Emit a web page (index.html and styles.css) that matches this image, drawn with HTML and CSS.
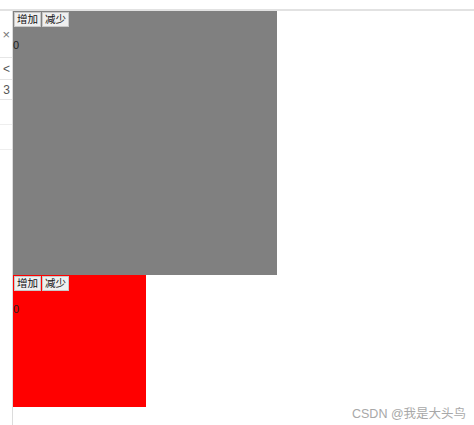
FILE: index.html
```html
<!DOCTYPE html>
<html>
<head>
<meta charset="utf-8">
<link rel="stylesheet" href="styles.css">
</head>
<body>
<div class="topline"></div>
<div class="layout">
  <div class="side">
    <div class="row r1">×</div>
    <div class="row r2">&lt;</div>
    <div class="row r3">3</div>
    <div class="row r4"></div>
    <div class="row r5"></div>
  </div>
  <div class="main">
    <div class="box gray">
      <div class="btns"><button class="btn">增加</button><button class="btn">减少</button></div>
      <p class="count">0</p>
    </div>
    <div class="box red">
      <div class="btns"><button class="btn">增加</button><button class="btn">减少</button></div>
      <p class="count">0</p>
    </div>
  </div>
</div>
<div class="mark">CSDN @我是大头鸟</div>
</body>
</html>
```
FILE: styles.css
```css
html, body {
  margin: 0;
  padding: 0;
  background: #fff;
  font-family: "Liberation Sans", "Noto Sans CJK SC", sans-serif;
  height: 425px;
  overflow: hidden;
}
.topline {
  margin-top: 9px;
  height: 2px;
  background: #e2e2e2;
}
.layout {
  display: flex;
  height: 414px;
}
.side {
  width: 13px;
  border-right: 1px solid #dcdcdc;
  box-sizing: border-box;
  overflow: hidden;
  color: #555;
  font-size: 12px;
}
.row {
  border-bottom: 1px solid #e6e6e6;
  display: flex;
  align-items: center;
  justify-content: flex-end;
  padding-right: 2px;
  box-sizing: border-box;
}
.r1 { height: 47px; color: #777; font-size: 13px; }
.r2 { height: 22px; }
.r3 { height: 20px; }
.r4 { height: 25px; border-bottom-color: #eee; }
.r5 { height: 25px; border-bottom-color: #eee; }
.main {
  display: flex;
  flex-direction: column;
}
.box {
  display: flex;
  flex-direction: column;
  align-items: flex-start;
}
.gray {
  width: 264px;
  height: 264px;
  background: #808080;
}
.red {
  width: 133px;
  height: 132px;
  background: #ff0000;
}
.btns {
  display: flex;
  gap: 1px;
  padding: 1px 0 0 1px;
}
.btn {
  font-family: "Liberation Sans", "Noto Sans CJK SC", sans-serif;
  font-size: 10.5px;
  height: 15px;
  width: 27px;
  padding: 0;
  margin: 0;
  line-height: 13px;
  background: #efefef;
  border: 1px solid #c8c8c8;
  color: #111;
}
.count {
  margin: 12px 0 0 0;
  font-size: 11px;
  line-height: 12px;
  color: #222;
}
.mark {
  position: absolute;
  left: 352px;
  top: 403px;
  font-size: 12.5px;
  color: #a8a8a8;
  white-space: nowrap;
}
```
